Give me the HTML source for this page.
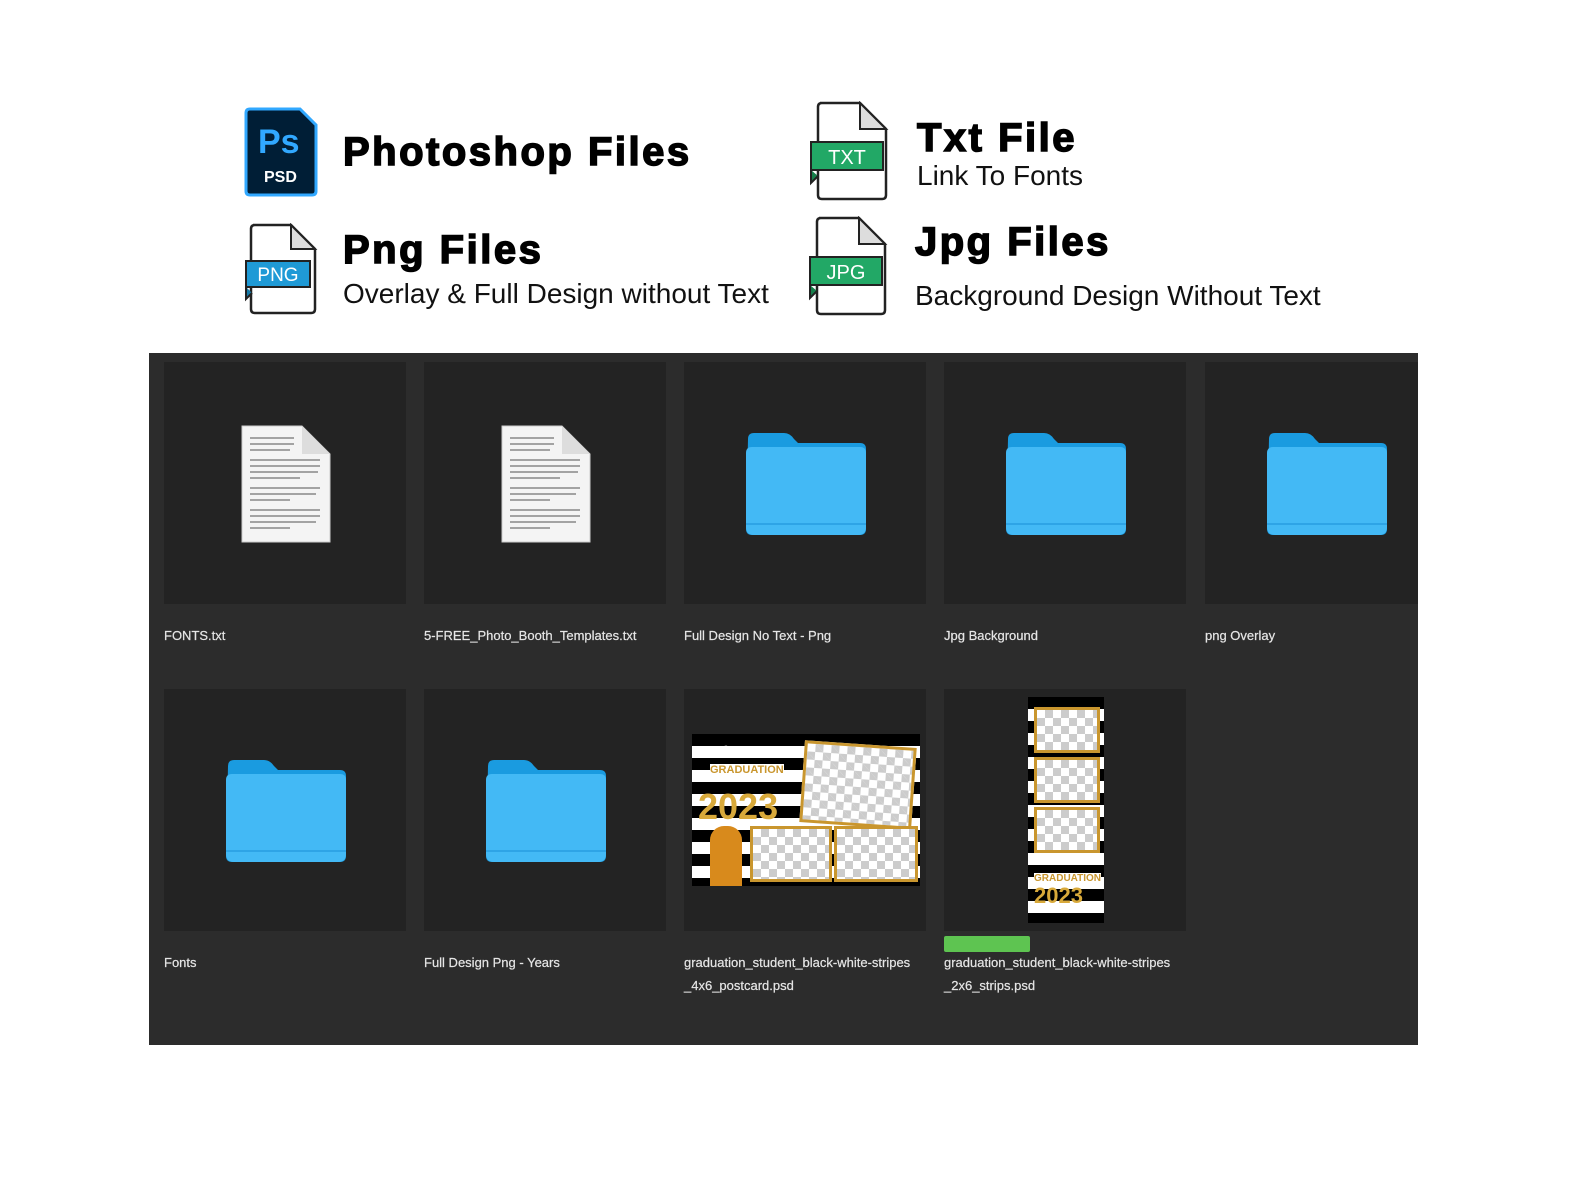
<!DOCTYPE html><html><head><style>
body{margin:0;width:1588px;height:1191px;background:#fff;position:relative;overflow:hidden;font-family:"Liberation Sans",sans-serif}
.a{position:absolute}
.h{font-weight:bold;font-size:40px;color:#000;letter-spacing:2.5px;-webkit-text-stroke:1.5px #000}
.s{font-size:28px;color:#111}
.panel{left:149px;top:353px;width:1269px;height:692px;background:#2c2c2c;overflow:hidden}
.t{position:absolute;width:242px;height:242px;background:#232323}
.l{position:absolute;color:#e6e6e6;font-size:13px;line-height:23px;-webkit-text-stroke:0.2px #e6e6e6}
.chk{background-color:#fff;background-image:linear-gradient(45deg,#ccc 25%,transparent 25%,transparent 75%,#ccc 75%),linear-gradient(45deg,#ccc 25%,transparent 25%,transparent 75%,#ccc 75%);background-size:16px 16px;background-position:0 0,8px 8px;border:3px solid #c9962e;box-sizing:border-box;position:absolute}
.str{background:repeating-linear-gradient(180deg,#000 0 12px,#fff 12px 24px)}
</style></head><body>
<svg class="a" style="left:244px;top:107px" width="74" height="90"><path d="M6 2H56L72 18V84Q72 88 68 88H6Q2 88 2 84V6Q2 2 6 2Z" fill="#001e36" stroke="#31a8ff" stroke-width="3"/><text x="14" y="46" font-family="Liberation Sans" font-weight="bold" font-size="34" fill="#31a8ff">Ps</text><text x="20" y="75" font-family="Liberation Sans" font-weight="bold" font-size="16" fill="#fff">PSD</text></svg>
<div class="a h" style="left:343px;top:130px">Photoshop Files</div>
<svg class="a" style="left:243px;top:223px" width="78" height="94"><path d="M10 2H48L72 26V86Q72 90 68 90H12Q8 90 8 86V6Q8 2 12 2Z" fill="#fff" stroke="#222" stroke-width="2.5"/><path d="M48 2V26H72Z" fill="#ddd" stroke="#222" stroke-width="2"/><rect x="3" y="38" width="64" height="26" fill="#1f9ad6" stroke="#222" stroke-width="2"/><path d="M3 64V76L9 70" fill="#157aa8" stroke="#222" stroke-width="2"/><text x="35" y="58" text-anchor="middle" font-family="Liberation Sans" font-size="19" fill="#fff">PNG</text></svg>
<div class="a h" style="left:343px;top:228px">Png Files</div>
<div class="a s" style="left:343px;top:278px">Overlay &amp; Full Design without Text</div>
<svg class="a" style="left:808px;top:101px" width="82" height="102"><path d="M12 2H52L78 28V94Q78 98 74 98H14Q10 98 10 94V6Q10 2 14 2Z" fill="#fff" stroke="#222" stroke-width="2.5"/><path d="M52 2V28H78Z" fill="#ddd" stroke="#222" stroke-width="2"/><rect x="3" y="41" width="72" height="28" fill="#22a866" stroke="#222" stroke-width="2"/><path d="M3 69V82L10 75" fill="#17804c" stroke="#222" stroke-width="2"/><text x="39" y="63" text-anchor="middle" font-family="Liberation Sans" font-size="20" fill="#fff">TXT</text></svg>
<div class="a h" style="left:917px;top:116px">Txt File</div>
<div class="a s" style="left:917px;top:160px">Link To Fonts</div>
<svg class="a" style="left:807px;top:216px" width="82" height="102"><path d="M12 2H52L78 28V94Q78 98 74 98H14Q10 98 10 94V6Q10 2 14 2Z" fill="#fff" stroke="#222" stroke-width="2.5"/><path d="M52 2V28H78Z" fill="#ddd" stroke="#222" stroke-width="2"/><rect x="3" y="41" width="72" height="28" fill="#22a866" stroke="#222" stroke-width="2"/><path d="M3 69V82L10 75" fill="#17804c" stroke="#222" stroke-width="2"/><text x="39" y="63" text-anchor="middle" font-family="Liberation Sans" font-size="20" fill="#fff">JPG</text></svg>
<div class="a h" style="left:915px;top:220px">Jpg Files</div>
<div class="a s" style="left:915px;top:280px">Background Design Without Text</div>

<div class="a panel">
<div class="t" style="left:15px;top:9px"><svg style="position:absolute;left:76px;top:62px" width="92" height="120"><path d="M2 2H62L90 30V118H2Z" fill="#f4f4f4" stroke="#ccc"/><path d="M62 2V30H90" fill="#ddd"/><g stroke="#888" stroke-width="1.5"><line x1="10" y1="14" x2="54" y2="14"/><line x1="10" y1="20" x2="54" y2="20"/><line x1="10" y1="26" x2="50" y2="26"/><line x1="10" y1="36" x2="80" y2="36"/><line x1="10" y1="42" x2="80" y2="42"/><line x1="10" y1="48" x2="78" y2="48"/><line x1="10" y1="54" x2="60" y2="54"/><line x1="10" y1="64" x2="80" y2="64"/><line x1="10" y1="70" x2="76" y2="70"/><line x1="10" y1="76" x2="50" y2="76"/><line x1="10" y1="86" x2="80" y2="86"/><line x1="10" y1="92" x2="80" y2="92"/><line x1="10" y1="98" x2="76" y2="98"/><line x1="10" y1="104" x2="50" y2="104"/></g></svg></div>
<div class="t" style="left:275px;top:9px"><svg style="position:absolute;left:76px;top:62px" width="92" height="120"><path d="M2 2H62L90 30V118H2Z" fill="#f4f4f4" stroke="#ccc"/><path d="M62 2V30H90" fill="#ddd"/><g stroke="#888" stroke-width="1.5"><line x1="10" y1="14" x2="54" y2="14"/><line x1="10" y1="20" x2="54" y2="20"/><line x1="10" y1="26" x2="50" y2="26"/><line x1="10" y1="36" x2="80" y2="36"/><line x1="10" y1="42" x2="80" y2="42"/><line x1="10" y1="48" x2="78" y2="48"/><line x1="10" y1="54" x2="60" y2="54"/><line x1="10" y1="64" x2="80" y2="64"/><line x1="10" y1="70" x2="76" y2="70"/><line x1="10" y1="76" x2="50" y2="76"/><line x1="10" y1="86" x2="80" y2="86"/><line x1="10" y1="92" x2="80" y2="92"/><line x1="10" y1="98" x2="76" y2="98"/><line x1="10" y1="104" x2="50" y2="104"/></g></svg></div>
<svg width="0" height="0" style="position:absolute"><defs><symbol id="f" viewBox="0 0 124 106"><path d="M4 8Q4 2 10 2H40Q46 2 50 8L54 12H116Q122 12 122 18V98Q122 104 116 104H8Q2 104 2 98Z" fill="#1a9be0"/><path d="M2 22Q2 16 8 16H116Q122 16 122 22V96Q122 104 114 104H10Q2 104 2 96Z" fill="#43b9f5"/><rect x="2" y="92" width="120" height="2" fill="#2ea4e6"/></symbol></defs></svg>
<div class="t" style="left:535px;top:9px"><svg style="position:absolute;left:60px;top:69px" width="124" height="106"><use href="#f"/></svg></div>
<div class="t" style="left:795px;top:9px"><svg style="position:absolute;left:60px;top:69px" width="124" height="106"><use href="#f"/></svg></div>
<div class="t" style="left:1056px;top:9px"><svg style="position:absolute;left:60px;top:69px" width="124" height="106"><use href="#f"/></svg></div>
<div class="l" style="left:15px;top:271px">FONTS.txt</div>
<div class="l" style="left:275px;top:271px">5-FREE_Photo_Booth_Templates.txt</div>
<div class="l" style="left:535px;top:271px">Full Design No Text - Png</div>
<div class="l" style="left:795px;top:271px">Jpg Background</div>
<div class="l" style="left:1056px;top:271px">png Overlay</div>
<div class="t" style="left:15px;top:336px"><svg style="position:absolute;left:60px;top:69px" width="124" height="106"><use href="#f"/></svg></div>
<div class="t" style="left:275px;top:336px"><svg style="position:absolute;left:60px;top:69px" width="124" height="106"><use href="#f"/></svg></div>
<div class="t" style="left:535px;top:336px">
 <div class="str" style="position:absolute;left:8px;top:45px;width:228px;height:152px">
  <div style="position:absolute;left:10px;top:10px;color:#fff;font-family:'Liberation Serif',serif;font-style:italic;font-size:16px">Amber Garcia's</div>
  <div style="position:absolute;left:18px;top:30px;color:#c9962e;font-weight:bold;font-size:11px;background:#fff">GRADUATION</div>
  <div style="position:absolute;left:6px;top:52px;color:#d8a93a;font-weight:bold;font-size:36px">2023</div>
  <div style="position:absolute;left:18px;top:92px;width:32px;height:60px;background:#d88a1c;border-radius:14px 14px 0 0"></div>
  <div class="chk" style="left:110px;top:10px;width:112px;height:82px;transform:rotate(4deg)"></div>
  <div class="chk" style="left:58px;top:92px;width:82px;height:56px"></div>
  <div class="chk" style="left:142px;top:92px;width:84px;height:56px"></div>
 </div></div>
<div class="t" style="left:795px;top:336px">
 <div class="str" style="position:absolute;left:84px;top:8px;width:76px;height:226px">
  <div class="chk" style="left:6px;top:10px;width:66px;height:46px"></div>
  <div class="chk" style="left:6px;top:60px;width:66px;height:46px"></div>
  <div class="chk" style="left:6px;top:110px;width:66px;height:46px"></div>
  <div style="position:absolute;left:6px;top:158px;color:#fff;font-style:italic;font-family:'Liberation Serif',serif;font-size:11px">Amber Garcia's</div>
  <div style="position:absolute;left:6px;top:176px;color:#c9962e;font-weight:bold;font-size:10px;background:#fff">GRADUATION</div>
  <div style="position:absolute;left:6px;top:186px;color:#d8a93a;font-weight:bold;font-size:22px">2023</div>
 </div></div>
<div style="position:absolute;left:795px;top:583px;width:86px;height:16px;background:#5ec451;border-radius:2px"></div>
<div class="l" style="left:15px;top:598px">Fonts</div>
<div class="l" style="left:275px;top:598px">Full Design Png - Years</div>
<div class="l" style="left:535px;top:598px">graduation_student_black-white-stripes<br>_4x6_postcard.psd</div>
<div class="l" style="left:795px;top:598px">graduation_student_black-white-stripes<br>_2x6_strips.psd</div>
</div>
</body></html>
